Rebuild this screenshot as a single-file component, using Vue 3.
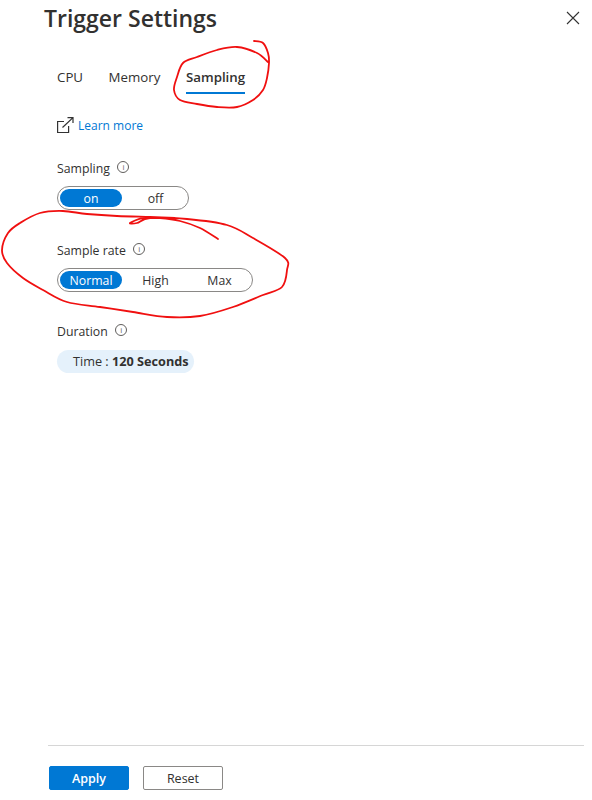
<script setup>
const smooth = (p) => {
  let d = `M${p[0][0]} ${p[0][1]}`
  for (let i = 0; i < p.length - 1; i++) {
    const a = p[Math.max(i - 1, 0)], b = p[i], c = p[i + 1], e = p[Math.min(i + 2, p.length - 1)]
    d += ` C${(b[0] + (c[0] - a[0]) / 6).toFixed(1)} ${(b[1] + (c[1] - a[1]) / 6).toFixed(1)} ${(c[0] - (e[0] - b[0]) / 6).toFixed(1)} ${(c[1] - (e[1] - b[1]) / 6).toFixed(1)} ${c[0]} ${c[1]}`
  }
  return d
}
const tabLoop = smooth([[254,41],[263,43],[268,53],[269,63],[267,78],[263,90],[253,100],[237,107],[217,107],[197,104],[180,100],[174,90],[177,77],[183,63],[197,57],[217,50],[237,47],[257,53],[268,62]])
const rateLoop = smooth([[218,239],[200,228],[180,221],[160,218],[143,218],[130,223],[137,223],[150,218],[187,219],[227,225],[253,238],[285,258],[287,270],[282,287],[263,295],[233,307],[200,316],[167,317],[133,312],[100,307],[67,302],[43,290],[23,278],[7,263],[2,250],[8,233],[20,223],[40,213],[63,211],[87,214],[117,216],[150,217],[175,218]])
const tabs = ['CPU', 'Memory', 'Sampling']
</script>

<template>
  <div class="panel">
    <header class="head">
      <h1>Trigger Settings</h1>
      <svg class="close" width="14" height="14" viewBox="0 0 14 14"><path d="M1 1l12 12M13 1L1 13" stroke="#333" stroke-width="1.1" fill="none"/></svg>
    </header>

    <nav class="tabs">
      <span v-for="t in tabs" :key="t" class="tab" :class="{ active: t === 'Sampling' }">{{ t }}</span>
    </nav>

    <div class="learn">
      <svg width="17" height="16" viewBox="0 0 17 16" fill="none" stroke="#333" stroke-width="1.2">
        <path d="M7 4.5H0.6v11h11V9"/>
        <path d="M5.5 10.5L16 0.6M10.5 0.6h5.5v5.5"/>
      </svg>
      <a>Learn more</a>
    </div>

    <section class="field first">
      <div class="label">Sampling <i class="info">i</i></div>
      <div class="seg small">
        <span class="on">on</span><span>off</span>
      </div>
    </section>

    <section class="field wide">
      <div class="label">Sample rate <i class="info">i</i></div>
      <div class="seg">
        <span class="on">Normal</span><span>High</span><span>Max</span>
      </div>
    </section>

    <section class="field">
      <div class="label">Duration <i class="info">i</i></div>
      <div class="chip">Time : <b>120 Seconds</b></div>
    </section>

    <footer class="foot">
      <button class="btn primary">Apply</button>
      <button class="btn">Reset</button>
    </footer>

    <svg class="ink" width="592" height="800" viewBox="0 0 592 800" fill="none" stroke="#f01010" stroke-width="1.8" stroke-linecap="round" stroke-linejoin="round">
      <path :d="tabLoop"/>
      <path :d="rateLoop"/>
    </svg>
  </div>
</template>

<style scoped>
.panel {
  position: relative;
  box-sizing: border-box;
  width: 592px;
  height: 800px;
  display: flex;
  flex-direction: column;
  background: #fff;
  color: #323130;
  font-family: "Open Sans", "Noto Sans", sans-serif;
  font-size: 12.3px;
  overflow: hidden;
}
.head {
  display: flex;
  justify-content: space-between;
  align-items: center;
  height: 36px;
  padding: 0 12px 0 44px;
}
h1 {
  margin: 0;
  font-size: 23px;
  line-height: 36px;
  font-weight: 600;
  color: #323130;
}
.tabs {
  display: flex;
  gap: 25.5px;
  margin-top: 22px;
  padding-left: 57px;
}
.tab {
  height: 36px;
  line-height: 39px;
  font-size: 13.3px;
  box-sizing: border-box;
}
.tab.active {
  font-weight: 600;
  border-bottom: 2px solid #0078d4;
}
.learn {
  display: flex;
  align-items: center;
  gap: 4px;
  margin-top: 21px;
  height: 20px;
  padding-left: 57px;
}
.learn a { color: #0078d4; font-size: 12px; }
.field {
  padding-left: 57px;
  margin-top: 31px;
}
.field.wide { margin-top: 32px; }
.field.first { margin-top: 25px; }
.label {
  display: flex;
  align-items: center;
  gap: 7.5px;
  height: 16px;
}
.info {
  width: 10px;
  height: 10px;
  border: 1px solid #605e5c;
  border-radius: 50%;
  color: #605e5c;
  font-size: 8px;
  font-style: normal;
  line-height: 10px;
  text-align: center;
  margin-top: -3px;
}
.seg {
  display: flex;
  box-sizing: border-box;
  width: 196px;
  height: 24px;
  margin-top: 10px;
  padding: 2px;
  border: 1px solid #8a8886;
  border-radius: 12px;
  font-size: 12.3px;
  line-height: 20px;
}
.seg.small { width: 132px; }
.seg span {
  flex: none;
  box-sizing: border-box;
  width: 62px;
  height: 18px;
  margin-right: 2px;
  padding-left: 1px;
  text-align: center;
  border-radius: 9px;
}
.seg .on {
  padding-left: 0;
  background: #0078d4;
  color: #fff;
}
.chip {
  width: fit-content;
  height: 23px;
  margin-top: 11px;
  padding: 0 5px 0 16px;
  border-radius: 12px;
  background: #e5f1fb;
  font-size: 12.7px;
  line-height: 23px;
}
.chip b { font-weight: 700; }
.foot {
  display: flex;
  gap: 14px;
  margin: auto 8px 10px 48px;
  padding: 20px 0 0 1px;
  border-top: 1px solid #d6d6d6;
}
.btn {
  box-sizing: border-box;
  width: 80px;
  height: 24px;
  padding: 0;
  border: 1px solid #8a8886;
  border-radius: 2px;
  background: #fff;
  color: #323130;
  font: 12.5px "Open Sans", "Noto Sans", sans-serif;
}
.btn.primary {
  border-color: #0078d4;
  background: #0078d4;
  color: #fff;
  font-weight: 600;
}
.ink {
  position: absolute;
  top: 0;
  left: 0;
  pointer-events: none;
}
</style>
